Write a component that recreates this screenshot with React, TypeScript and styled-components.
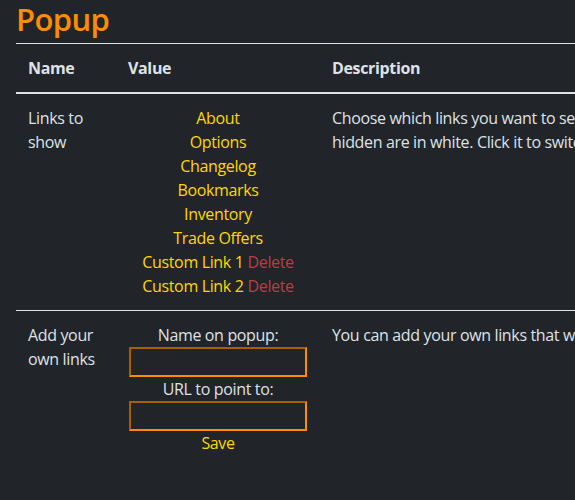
import React from 'react';
import styled, {createGlobalStyle} from 'styled-components';

const GlobalStyle = createGlobalStyle`
  html, body {
    margin: 0;
    padding: 0;
    background: #212529;
    overflow: hidden;
  }
  body {
    padding: 0 16px;
    color: #dee2e6;
    font-family: "Segoe UI", "Open Sans", "Liberation Sans", sans-serif;
    font-size: 16px;
    line-height: 24px;
    letter-spacing: -0.35px;
  }
`;

const Title = styled.h1`
  margin: 0 0 5px;
  font-size: 31px;
  line-height: 38px;
  font-weight: 600;
  letter-spacing: -0.6px;
  color: #ff8c00;
`;

const Table = styled.table`
  width: 1100px;
  border-collapse: collapse;
  border-top: 1px solid #dee2e6;
`;

const HeadCell = styled.th<{ $width?: number }>`
  width: ${p => (p.$width ? `${p.$width}px` : 'auto')};
  padding: 12px;
  text-align: left;
  font-weight: 700;
  border-bottom: 2px solid #dee2e6;
`;

const Row = styled.tr<{ $last?: boolean }>`
  border-bottom: ${p => (p.$last ? 'none' : '1px solid #dee2e6')};
`;

const Cell = styled.td`
  padding: 12px;
  vertical-align: top;
`;

const ValueCell = styled(Cell)`
  text-align: center;
`;

const LinkItem = styled.div`
  color: #ffd700;
  cursor: pointer;
`;

const DeleteLink = styled.span`
  color: #bd3c42;
  cursor: pointer;
  margin-left: 4px;
`;

const Label = styled.div`
  color: #dee2e6;
`;

const TextInput = styled.input`
  display: block;
  box-sizing: border-box;
  width: 178px;
  height: 30px;
  margin: 0 auto;
  border: 2px inset #ff8c00;
  background: transparent;
  color: #dee2e6;
  outline: none;
`;

const SaveButton = styled.div`
  color: #ffd700;
  cursor: pointer;
`;

const links = ['About', 'Options', 'Changelog', 'Bookmarks', 'Inventory', 'Trade Offers'];
const customLinks = ['Custom Link 1', 'Custom Link 2'];

export default function App() {
  return (
    <>
      <GlobalStyle/>
      <Title>Popup</Title>
      <Table>
        <thead>
        <tr>
          <HeadCell $width={76}>Name</HeadCell>
          <HeadCell $width={180}>Value</HeadCell>
          <HeadCell>Description</HeadCell>
        </tr>
        </thead>
        <tbody>
        <Row>
          <Cell>Links to show</Cell>
          <ValueCell>
            {links.map(link => <LinkItem key={link}>{link}</LinkItem>)}
            {customLinks.map(link => (
              <LinkItem key={link}>
                {link}<DeleteLink>Delete</DeleteLink>
              </LinkItem>
            ))}
          </ValueCell>
          <Cell>
            Choose which links you want to see in the popup. The ones shown are in yellow, the ones
            <br/>
            hidden are in white. Click it to switch between shown and hidden.
          </Cell>
        </Row>
        <Row $last>
          <Cell>Add your own links</Cell>
          <ValueCell>
            <Label>Name on popup:</Label>
            <TextInput type="text"/>
            <Label>URL to point to:</Label>
            <TextInput type="text"/>
            <SaveButton>Save</SaveButton>
          </ValueCell>
          <Cell>
            You can add your own links that will show up in the popup as well.
          </Cell>
        </Row>
        </tbody>
      </Table>
    </>
  );
}
